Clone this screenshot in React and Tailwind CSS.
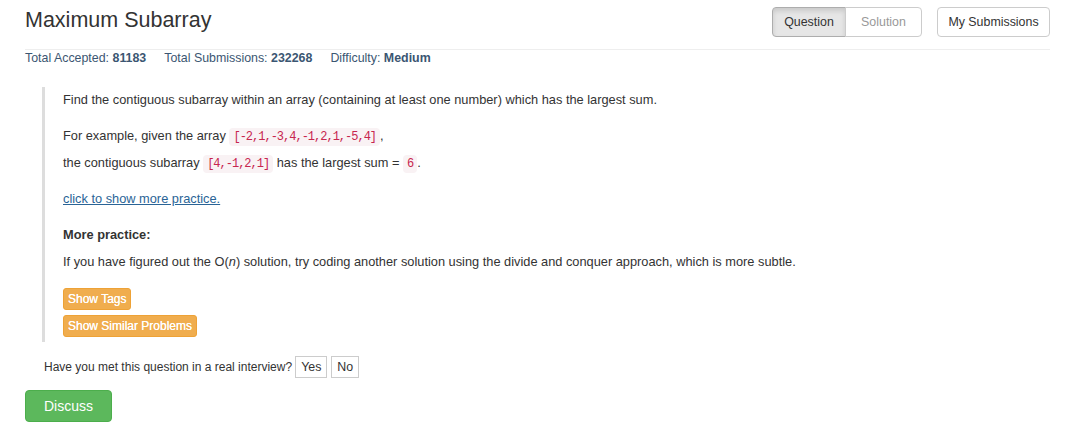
import React from 'react';

const Code = ({ children }) => (
    <code className="rounded-[4px] bg-[#f9f2f4] px-[4px] py-[2px] font-['Liberation_Mono',monospace] text-[12px] leading-none tracking-[-1px] text-[#c7254e]">
        {children}
    </code>
);

const App = () => {
    return (
        <div className="min-h-[430px] bg-white pl-[25px] pr-[19px] font-['Liberation_Sans',Arial,sans-serif] text-[12px] text-[#333]">
            {/* header */}
            <div className="flex items-start justify-between pt-[7px]">
                <h1 className="mt-[1px] text-[21.5px] leading-[24px] font-normal">Maximum Subarray</h1>
                <div className="flex">
                    <div className="flex h-[30px]">
                        <button className="w-[74px] rounded-l-[4px] border border-[#adadad] bg-[#e6e6e6] text-[12.4px] text-[#333] shadow-[inset_0_3px_5px_rgba(0,0,0,0.125)]">
                            Question
                        </button>
                        <button className="-ml-px w-[77px] rounded-r-[4px] border border-[#ccc] bg-white text-[12.4px] text-[#999]">
                            Solution
                        </button>
                    </div>
                    <button className="ml-[15px] h-[30px] w-[113px] rounded-[4px] border border-[#ccc] bg-white text-[12.4px] text-[#333]">
                        My Submissions
                    </button>
                </div>
            </div>

            {/* stats */}
            <div className="mt-[12px] flex gap-[18px] border-t border-[#eee] text-[12.4px] leading-[16px] text-[#3b5672]">
                <span>Total Accepted: <b>81183</b></span>
                <span>Total Submissions: <b>232268</b></span>
                <span>Difficulty: <b>Medium</b></span>
            </div>

            {/* question */}
            <div className="mt-[21px] ml-[17px] border-l-[3px] border-[#ddd] pl-[18px] pt-[4px] pb-[5px] text-[12.8px] leading-[17px]">
                <p className="h-[17px]">Find the contiguous subarray within an array (containing at least one number) which has the largest sum.</p>
                <p className="mt-[19px] h-[17px]">
                    For example, given the array <Code>[-2,1,-3,4,-1,2,1,-5,4]</Code>,
                </p>
                <p className="mt-[10px] h-[17px]">
                    the contiguous subarray <Code>[4,-1,2,1]</Code> has the largest sum = <Code>6</Code>.
                </p>
                <p className="mt-[19px] h-[17px]">
                    <a href="#" className="text-[#2a6496] underline">click to show more practice.</a>
                </p>
                <p className="mt-[19px] h-[17px] font-bold">More practice:</p>
                <p className="mt-[10px] h-[17px]">
                    If you have figured out the O(<i>n</i>) solution, try coding another solution using the divide and conquer approach, which is more subtle.
                </p>
                <div className="mt-[18px] flex flex-col items-start gap-[5px]">
                    <button className="h-[22px] rounded-[3px] border border-[#eea236] bg-[#f0ad4e] px-[4px] text-[12px] text-white [text-shadow:0_0_0.4px_#fff]">
                        Show Tags
                    </button>
                    <button className="h-[22px] rounded-[3px] border border-[#eea236] bg-[#f0ad4e] px-[4px] text-[12px] text-white [text-shadow:0_0_0.4px_#fff]">
                        Show Similar Problems
                    </button>
                </div>
            </div>

            {/* interview */}
            <div className="mt-[14px] ml-[19px] flex items-center gap-[3px]">
                <span>Have you met this question in a real interview?</span>
                <button className="h-[22px] border border-[#ccc] bg-white px-[5px] text-[12.4px] text-[#333]">Yes</button>
                <button className="ml-[1px] h-[22px] border border-[#ccc] bg-white px-[5px] text-[12.4px] text-[#333]">No</button>
            </div>

            <button className="mt-[12px] h-[32px] rounded-[4px] border border-[#4cae4c] bg-[#5cb85c] px-[18px] text-[14px] text-white">
                Discuss
            </button>
        </div>
    );
};

export default App;
